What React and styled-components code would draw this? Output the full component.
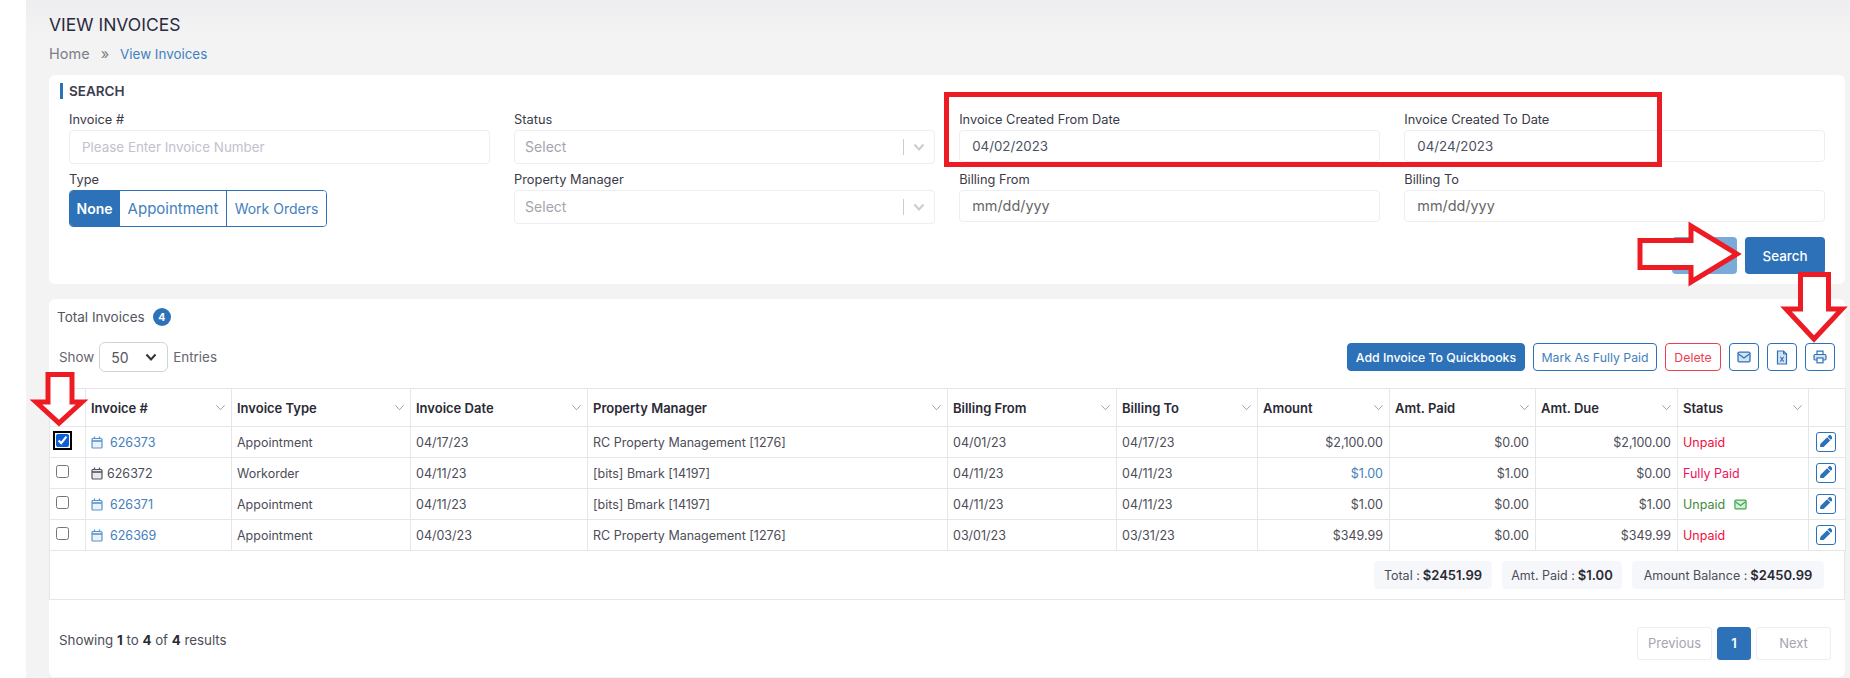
import React from "react";
import styled, { createGlobalStyle } from "styled-components";
import { FaPen } from "react-icons/fa";

const primary = "#2d72b8";

const GlobalStyle = createGlobalStyle`
  html, body {
    margin: 0;
    padding: 0;
    background: #fff;
  }
  body {
    font-family: Inter, "Open Sans", sans-serif;
    color: #3a3a48;
  }
  * {
    box-sizing: border-box;
  }
`;

const Page = styled.div`
  position: relative;
  width: 1850px;
  height: 678px;
  overflow: hidden;
  padding-left: 26px;
`;

const Main = styled.main`
  height: 100%;
  padding: 15px 5px 0 23px;
  background: linear-gradient(#eeeef0 0, #f3f3f4 40px);
`;

const Title = styled.h1`
  margin: 0;
  font-size: 17.5px;
  line-height: 20px;
  font-weight: 400;
  color: #2a2a3c;
`;

const Breadcrumb = styled.div`
  display: flex;
  align-items: center;
  height: 19px;
  margin: 9px 0 12px;
  font-size: 14.5px;
  color: #7d7d88;

  span {
    margin: 0 11px;
  }

  a {
    font-size: 13.4px;
    color: #4480bd;
  }
`;

const Card = styled.section`
  background: #fff;
  border-radius: 6px;
`;

const SearchCard = styled(Card)`
  height: 209px;
  padding: 8px 20px 10px;
`;

const SectionTitle = styled.h2`
  margin: 0 0 12px -9px;
  padding-left: 6px;
  border-left: 3px solid ${primary};
  font-size: 13.5px;
  line-height: 16px;
  font-weight: 600;
  color: #3d3d50;
`;

const FieldGrid = styled.div`
  display: grid;
  grid-template-columns: repeat(4, 420.6px);
  column-gap: 24.5px;
  row-gap: 7px;
`;

const Label = styled.label`
  display: block;
  height: 19px;
  font-size: 12.8px;
  line-height: 17px;
  color: #3a3a48;
`;

const TextInput = styled.input`
  display: block;
  width: 100%;
  height: ${(p) => (p.$date ? "32px" : "34px")};
  padding: 0 12px;
  border: 1px solid #eceef3;
  border-radius: 4px;
  outline: 0;
  font-family: inherit;
  font-size: ${(p) => (p.$date ? "13.3px" : "13.4px")};
  color: #4a5160;

  &::placeholder {
    font-size: ${(p) => (p.$date ? "14.4px" : "13.4px")};
    color: ${(p) => (p.$date ? "#666" : "#c2c2cc")};
    opacity: 1;
  }
`;

const SelectBox = styled.div`
  display: flex;
  align-items: center;
  justify-content: space-between;
  height: 34px;
  padding: 0 9px 2px 10px;
  border: 1px solid #eceef3;
  border-radius: 4px;
  font-size: 14px;
  color: #a5a3ad;
`;

const SelectArrow = styled.div`
  display: flex;
  align-items: center;
  height: 16px;
  margin-top: 2px;
  border-left: 1px solid #ccc;
  padding-left: 9px;
  color: #ccc;
`;

const Toggle = styled.div`
  display: inline-flex;
  height: 37px;
  border: 1px solid ${primary};
  border-radius: 4px;
  overflow: hidden;
`;

const ToggleItem = styled.button`
  width: ${(p) => p.$width}px;
  padding: 0;
  border: 0;
  border-left: ${(p) => (p.$first ? "0" : `1px solid ${primary}`)};
  background: ${(p) => (p.$active ? primary : "#fff")};
  color: ${(p) => (p.$active ? "#fff" : "#4480bd")};
  font-family: inherit;
  font-size: ${(p) => p.$size || 14}px;
  font-weight: ${(p) => (p.$active ? 600 : 400)};
`;

const SearchActions = styled.div`
  display: flex;
  justify-content: flex-end;
  gap: 8px;
  margin-top: 10px;
`;

const SearchButton = styled.button`
  width: ${(p) => (p.$light ? "65px" : "80px")};
  height: 37px;
  border: 0;
  border-radius: 4px;
  background: ${(p) => (p.$light ? "#7aaad8" : primary)};
  color: #fff;
  font-family: inherit;
  font-size: 13.4px;
  font-weight: 500;
`;

const ResultCard = styled(Card)`
  height: 378px;
  margin-top: 15px;
  padding-top: 9px;
`;

const TotalRow = styled.div`
  display: flex;
  align-items: center;
  gap: 8px;
  height: 18px;
  padding-left: 8px;
  font-size: 13.5px;
  color: #55555f;
`;

const Badge = styled.span`
  display: flex;
  align-items: center;
  justify-content: center;
  width: 18px;
  height: 18px;
  border-radius: 50%;
  background: ${primary};
  color: #fff;
  font-size: 10.5px;
  font-weight: 700;
`;

const Toolbar = styled.div`
  display: flex;
  align-items: center;
  justify-content: space-between;
  height: 30px;
  margin: 16px 10px 16px 10px;
`;

const ShowEntries = styled.div`
  display: flex;
  align-items: center;
  gap: 5px;
  font-size: 13.4px;
  color: #66666f;
`;

const PageSize = styled.div`
  display: flex;
  align-items: center;
  justify-content: space-between;
  width: 69px;
  height: 30px;
  padding: 0 10px 0 11px;
  border: 1px solid #ced4da;
  border-radius: 6px;
  font-size: 14px;
  color: #55555f;
`;

const Actions = styled.div`
  display: flex;
  align-items: center;
  gap: 8px;
`;

const ActionButton = styled.button`
  display: flex;
  align-items: center;
  justify-content: center;
  width: ${(p) => p.$width}px;
  height: 28px;
  padding: 0;
  border: 1px solid ${(p) => (p.$danger ? "#ef3e4f" : primary)};
  border-radius: 4px;
  background: ${(p) => (p.$solid ? primary : "#fff")};
  color: ${(p) => (p.$solid ? "#fff" : p.$danger ? "#ef3e4f" : "#4480bd")};
  font-family: inherit;
  font-size: 12.3px;
  font-weight: ${(p) => (p.$solid ? 500 : 400)};
`;

const Table = styled.table`
  width: 100%;
  table-layout: fixed;
  border-collapse: collapse;
  font-size: 12.5px;
  color: #4d4d58;
`;

const Th = styled.th`
  height: 38px;
  padding: 0 5px;
  border: 1px solid #e5e6ea;
  text-align: left;
  font-weight: 600;
  font-size: 13px;
  color: #2a2a35;
`;

const ThInner = styled.div`
  display: flex;
  align-items: center;
  justify-content: space-between;
`;

const Td = styled.td`
  height: 31px;
  padding: 0 ${(p) => (p.$right ? "6px" : "5px")};
  border: 1px solid #e5e6ea;
  text-align: ${(p) => (p.$right ? "right" : "left")};
  color: ${(p) => p.$color || "inherit"};
`;

const CheckCell = styled(Td)`
  padding: 0 0 4px 5.5px;
`;

const Check = styled.input`
  display: block;
  width: 13px;
  height: 13px;
  margin: 0;
  accent-color: #0b5fd8;
  outline: ${(p) => (p.$focused ? "2px solid #000" : "0")};
  outline-offset: 1px;
  border-radius: 2px;
`;

const InvoiceLink = styled.span`
  display: flex;
  align-items: center;
  gap: ${(p) => (p.$link ? "7px" : "4px")};
  color: ${(p) => (p.$link ? "#4480bd" : "#4d4d58")};
`;

const Status = styled.span`
  display: flex;
  align-items: center;
  gap: 9px;
  color: ${(p) => (p.$paid ? "#f0105a" : p.$sent ? "#3f8a3a" : "#f00d3c")};
`;

const EditButton = styled.button`
  display: block;
  width: 20px;
  height: 20px;
  margin-left: 2px;
  padding: 0;
  border: 1px solid ${primary};
  border-radius: 3px;
  background: #fff;
  color: ${primary};
  font-size: 12.5px;
  line-height: 21px;
`;

const Totals = styled.div`
  display: flex;
  justify-content: flex-end;
  gap: 10px;
  height: 49px;
  padding: 10px 20px 0 0;
  border: 1px solid #e5e6ea;
  border-top: 0;
`;

const TotalChip = styled.div`
  display: flex;
  align-items: center;
  justify-content: center;
  width: ${(p) => p.$width}px;
  height: 28px;
  border-radius: 4px;
  background: #f6f7fb;
  font-size: 12.5px;
  color: #4d4d58;

  strong {
    margin-left: 3px;
    font-size: 13px;
    font-weight: 600;
    color: #2a2a35;
  }
`;

const Footer = styled.div`
  display: flex;
  align-items: flex-start;
  justify-content: space-between;
  padding: 27px 14px 0 10px;
`;

const Showing = styled.div`
  margin-top: 5px;
  font-size: 13.3px;
  line-height: 16px;
  color: #4d4d58;

  b {
    font-weight: 700;
    color: #2a2a35;
  }
`;

const Pager = styled.div`
  display: flex;
  gap: 5px;
`;

const PageButton = styled.button`
  width: ${(p) => p.$width}px;
  height: 33px;
  padding: 0 0 2px;
  border: 1px solid ${(p) => (p.$active ? primary : "#eceef3")};
  border-radius: 3px;
  background: ${(p) => (p.$active ? primary : "#fff")};
  color: ${(p) => (p.$active ? "#fff" : "#a5a5b0")};
  font-family: inherit;
  font-size: 13px;
  font-weight: ${(p) => (p.$active ? 600 : 400)};
`;

const Annotations = styled.svg`
  position: absolute;
  left: 0;
  top: 0;
  width: 1850px;
  height: 678px;
  pointer-events: none;
`;

const Chevron = ({ size = 12, color = "currentColor", width = 2 }) => (
  <svg width={size} height={size} viewBox="0 0 12 12" fill="none" stroke={color} strokeWidth={width}>
    <path d="M1.5 3.5 6 8.5l4.5-5" />
  </svg>
);

const Calendar = ({ color }) => (
  <svg width="12" height="13" viewBox="0 0 12 13" fill="none">
    <rect x="1" y="2.5" width="10" height="9.5" rx="1" stroke={color} strokeWidth="1.2" fill={color} fillOpacity="0.12" />
    <path d="M1 5h10" stroke={color} strokeWidth="1.6" />
    <path d="M3.5 0.5v2.5M8.5 0.5v2.5" stroke={color} strokeWidth="1.3" />
  </svg>
);

const MailIcon = ({ color, size = 14 }) => (
  <svg width={size} height={size} viewBox="0 0 14 14" fill="none">
    <rect x="1" y="2.2" width="12" height="9.6" rx="1.2" stroke={color} strokeWidth="1.3" fill={color} fillOpacity="0.2" />
    <path d="M1.5 4 7 8l5.5-4" stroke={color} strokeWidth="1.3" />
  </svg>
);

const SheetIcon = () => (
  <svg width="14" height="15" viewBox="0 0 14 15" fill="none">
    <path d="M2.5 1h6l3 3v10h-9z" stroke={primary} strokeWidth="1.2" fill={primary} fillOpacity="0.2" />
    <path d="M8.5 1v3h3" stroke={primary} strokeWidth="1" />
    <path d="M5.3 6.8 8.7 11.6M8.7 6.8 5.3 11.6" stroke={primary} strokeWidth="1.1" />
  </svg>
);

const PrintIcon = () => (
  <svg width="14" height="14" viewBox="0 0 14 14" fill="none">
    <path d="M4 4.5V1.2h6v3.3" stroke={primary} strokeWidth="1.2" />
    <rect x="1" y="4.5" width="12" height="5.5" rx="1.2" stroke={primary} strokeWidth="1.2" fill={primary} fillOpacity="0.2" />
    <rect x="4" y="8" width="6" height="4.8" stroke={primary} strokeWidth="1.2" fill="#fff" />
  </svg>
);

const columns = [
  { width: 36 },
  { width: 146, label: "Invoice #" },
  { width: 179, label: "Invoice Type" },
  { width: 177, label: "Invoice Date" },
  { width: 360, label: "Property Manager" },
  { width: 169, label: "Billing From" },
  { width: 141, label: "Billing To" },
  { width: 132, label: "Amount" },
  { width: 146, label: "Amt. Paid" },
  { width: 142, label: "Amt. Due" },
  { width: 131, label: "Status" },
  { width: 37 },
];

const invoices = [
  { id: "626373", link: true, checked: true, type: "Appointment", date: "04/17/23", manager: "RC Property Management [1276]", from: "04/01/23", to: "04/17/23", amount: "$2,100.00", paid: "$0.00", due: "$2,100.00", status: "Unpaid" },
  { id: "626372", type: "Workorder", date: "04/11/23", manager: "[bits] Bmark [14197]", from: "04/11/23", to: "04/11/23", amount: "$1.00", amountLink: true, paid: "$1.00", due: "$0.00", status: "Fully Paid" },
  { id: "626371", link: true, type: "Appointment", date: "04/11/23", manager: "[bits] Bmark [14197]", from: "04/11/23", to: "04/11/23", amount: "$1.00", paid: "$0.00", due: "$1.00", status: "Unpaid", sent: true },
  { id: "626369", link: true, type: "Appointment", date: "04/03/23", manager: "RC Property Management [1276]", from: "03/01/23", to: "03/31/23", amount: "$349.99", paid: "$0.00", due: "$349.99", status: "Unpaid" },
];

function Field({ label, children }) {
  return (
    <div>
      <Label>{label}</Label>
      {children}
    </div>
  );
}

function SelectField({ label }) {
  return (
    <Field label={label}>
      <SelectBox>
        Select
        <SelectArrow>
          <Chevron size={12} />
        </SelectArrow>
      </SelectBox>
    </Field>
  );
}

export default function App() {
  return (
    <Page>
      <GlobalStyle />
      <Main>
        <Title>VIEW INVOICES</Title>
        <Breadcrumb>
          Home<span>»</span>
          <a>View Invoices</a>
        </Breadcrumb>

        <SearchCard>
          <SectionTitle>SEARCH</SectionTitle>
          <FieldGrid>
            <Field label="Invoice #">
              <TextInput placeholder="Please Enter Invoice Number" />
            </Field>
            <SelectField label="Status" />
            <Field label="Invoice Created From Date">
              <TextInput $date readOnly value="04/02/2023" />
            </Field>
            <Field label="Invoice Created To Date">
              <TextInput $date readOnly value="04/24/2023" />
            </Field>
            <Field label="Type">
              <Toggle>
                <ToggleItem $first $active $width={49}>None</ToggleItem>
                <ToggleItem $width={107} $size={15}>Appointment</ToggleItem>
                <ToggleItem $width={100}>Work Orders</ToggleItem>
              </Toggle>
            </Field>
            <SelectField label="Property Manager" />
            <Field label="Billing From">
              <TextInput $date placeholder="mm/dd/yyy" />
            </Field>
            <Field label="Billing To">
              <TextInput $date placeholder="mm/dd/yyy" />
            </Field>
          </FieldGrid>
          <SearchActions>
            <SearchButton $light>Clear</SearchButton>
            <SearchButton>Search</SearchButton>
          </SearchActions>
        </SearchCard>

        <ResultCard>
          <TotalRow>
            Total Invoices <Badge>4</Badge>
          </TotalRow>
          <Toolbar>
            <ShowEntries>
              Show
              <PageSize>
                50
                <Chevron size={12} color="#333" />
              </PageSize>
              Entries
            </ShowEntries>
            <Actions>
              <ActionButton $solid $width={178}>Add Invoice To Quickbooks</ActionButton>
              <ActionButton $width={124}>Mark As Fully Paid</ActionButton>
              <ActionButton $danger $width={56}>Delete</ActionButton>
              <ActionButton $width={30}><MailIcon color={primary} /></ActionButton>
              <ActionButton $width={30}><SheetIcon /></ActionButton>
              <ActionButton $width={30}><PrintIcon /></ActionButton>
            </Actions>
          </Toolbar>

          <Table>
            <colgroup>
              {columns.map((col, i) => (
                <col key={i} width={col.width} />
              ))}
            </colgroup>
            <thead>
              <tr>
                {columns.map((col, i) => (
                  <Th key={i}>
                    {col.label && (
                      <ThInner>
                        {col.label}
                        <Chevron size={11} color="#9a9aa3" width={1} />
                      </ThInner>
                    )}
                  </Th>
                ))}
              </tr>
            </thead>
            <tbody>
              {invoices.map((row) => (
                <tr key={row.id}>
                  <CheckCell>
                    <Check type="checkbox" readOnly checked={!!row.checked} $focused={row.checked} />
                  </CheckCell>
                  <Td>
                    <InvoiceLink $link={row.link}>
                      <Calendar color={row.link ? "#5b93cc" : "#55555f"} />
                      {row.id}
                    </InvoiceLink>
                  </Td>
                  <Td>{row.type}</Td>
                  <Td>{row.date}</Td>
                  <Td>{row.manager}</Td>
                  <Td>{row.from}</Td>
                  <Td>{row.to}</Td>
                  <Td $right $color={row.amountLink ? "#4480bd" : undefined}>{row.amount}</Td>
                  <Td $right>{row.paid}</Td>
                  <Td $right>{row.due}</Td>
                  <Td>
                    <Status $paid={row.status === "Fully Paid"} $sent={row.sent}>
                      {row.status}
                      {row.sent && <MailIcon color="#3ca84c" size={13} />}
                    </Status>
                  </Td>
                  <Td>
                    <EditButton><FaPen /></EditButton>
                  </Td>
                </tr>
              ))}
            </tbody>
          </Table>

          <Totals>
            <TotalChip $width={118}>Total :<strong>$2451.99</strong></TotalChip>
            <TotalChip $width={120}>Amt. Paid :<strong>$1.00</strong></TotalChip>
            <TotalChip $width={192}>Amount Balance :<strong>$2450.99</strong></TotalChip>
          </Totals>

          <Footer>
            <Showing>
              Showing <b>1</b> to <b>4</b> of <b>4</b> results
            </Showing>
            <Pager>
              <PageButton $width={75}>Previous</PageButton>
              <PageButton $active $width={34}>1</PageButton>
              <PageButton $width={75}>Next</PageButton>
            </Pager>
          </Footer>
        </ResultCard>
      </Main>

      <Annotations viewBox="0 0 1850 678">
        <g fill="none" stroke="#ed1c24" strokeWidth="5">
          <rect x="946.5" y="94.5" width="713" height="70" />
          <polygon fill="#fff" points="1640,240.5 1691,240.5 1691,226 1737,254 1691,282 1691,267.5 1640,267.5" />
          <polygon fill="#fff" points="1800.5,274.5 1828.5,274.5 1828.5,309 1842,309 1814,339 1786,309 1800.5,309" />
          <polygon fill="#fff" points="48,374.5 72,374.5 72,402 82,402 59,423 36,402 48,402" />
        </g>
      </Annotations>
    </Page>
  );
}
